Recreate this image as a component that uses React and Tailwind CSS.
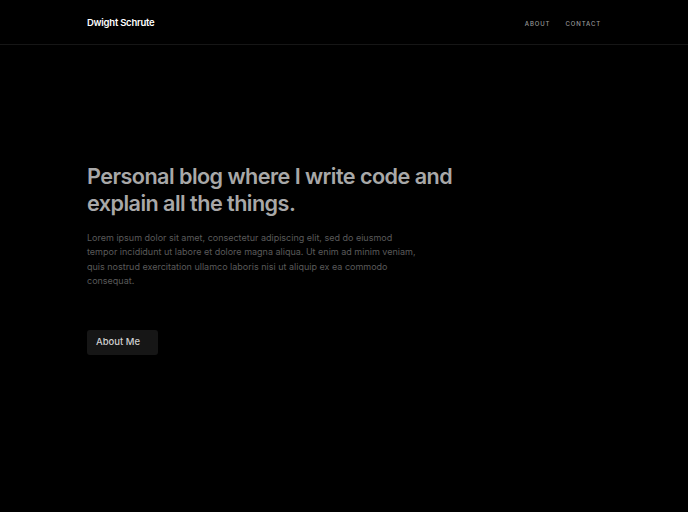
import React from 'react';

export default function App() {
  return (
    <div className="min-h-screen bg-black font-['Inter',sans-serif]">
      {/* Header */}
      <header className="border-b border-[#161616]">
        <div className="mx-auto flex h-[44px] max-w-[514px] items-center justify-between">
          <a className="mt-[2px] text-[9.5px] font-semibold tracking-tight text-white">Dwight Schrute</a>
          <nav className="mt-[2px] flex items-center gap-[15px] text-[6px] font-medium uppercase tracking-[0.15em] text-[#9a9a9a]">
            <a>About</a>
            <a>Contact</a>
          </nav>
        </div>
      </header>

      {/* Hero */}
      <main className="mx-auto max-w-[514px] pt-[118px]">
        <h1 className="max-w-[380px] text-[21.6px] font-semibold leading-[27px] tracking-tight text-[#a8a8a8]">
          Personal blog where I write code and explain all the things.
        </h1>
        <p className="mt-[14px] max-w-[336px] text-[9px] leading-[14.4px] text-[#5a5a5a]">
          Lorem ipsum dolor sit amet, consectetur adipiscing elit, sed do eiusmod tempor incididunt ut labore et dolore magna aliqua. Ut enim ad minim veniam, quis nostrud exercitation ullamco laboris nisi ut aliquip ex ea commodo consequat.
        </p>
        <button className="mt-[41px] flex h-[25px] w-[71px] items-center rounded-[3px] bg-[#161616] pl-[9px] text-[9.5px] font-medium text-[#cfcfcf]">
          About Me
        </button>
      </main>
    </div>
  );
}
